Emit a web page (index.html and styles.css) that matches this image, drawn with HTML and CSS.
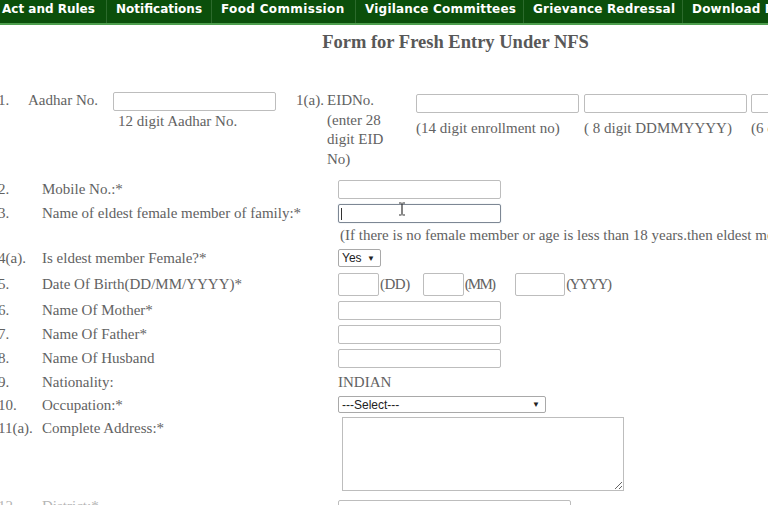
FILE: index.html
```html
<!DOCTYPE html>
<html lang="en">
<head>
<meta charset="utf-8">
<title>Form for Fresh Entry Under NFS</title>
<link rel="stylesheet" href="styles.css">
</head>
<body>
<nav class="topnav">
  <ul>
    <li class="n1">Act and Rules</li>
    <li class="n2">Notifications</li>
    <li class="n3">Food Commission</li>
    <li class="n4">Vigilance Committees</li>
    <li class="n5">Grievance Redressal</li>
    <li class="n6">Download Forms</li>
  </ul>
</nav>
<h1 class="title">Form for Fresh Entry Under NFS</h1>
<div class="form">
  <div class="row1">
    <div class="c-num">1.</div>
    <div class="c-lbl1">Aadhar No.</div>
    <div class="c-aadhar">
      <input class="txt w163" type="text">
      <div class="cap cap-aadhar">12 digit Aadhar No.</div>
    </div>
    <div class="c-num1a">1(a).</div>
    <div class="c-eidlbl"><div class="eidtext">EIDNo. (enter 28 digit EID No)</div></div>
    <div class="c-eid c-eid1">
      <input class="txt w163" type="text">
      <div class="cap cap-eid">(14 digit enrollment no)</div>
    </div>
    <div class="c-eid c-eid2">
      <input class="txt w163" type="text">
      <div class="cap cap-eid">( 8 digit DDMMYYYY)</div>
    </div>
    <div class="c-eid c-eid3">
      <input class="txt w163" type="text">
      <div class="cap cap-eid">(6 digit HHMMSS)</div>
    </div>
  </div>

  <div class="row h24">
    <div class="num">2.</div>
    <div class="lbl">Mobile No.:*</div>
    <div class="fld"><input class="txt w163" type="text"></div>
  </div>
  <div class="row h24">
    <div class="num">3.</div>
    <div class="lbl">Name of eldest female member of family:*</div>
    <div class="fld">
      <div class="focusbox">
        <span class="caret"></span>
        <svg class="ibeam" width="8" height="14" viewBox="0 0 8 14"><path d="M1 1h2.5M4.5 1H7M4 1.5v11M1 13h2.5M4.5 13H7" stroke="#333" stroke-width="1.2" fill="none"/></svg>
      </div>
    </div>
  </div>
  <div class="row h21">
    <div class="num"></div>
    <div class="lbl"></div>
    <div class="fld note">(If there is no female member or age is less than 18 years.then eldest member of the family will be taken as head of family)</div>
  </div>
  <div class="row h24">
    <div class="num">4(a).</div>
    <div class="lbl">Is eldest member Female?*</div>
    <div class="fld"><div class="sel sel-yes"><span>Yes</span><span class="arr">&#9660;</span></div></div>
  </div>
  <div class="row h28">
    <div class="num">5.</div>
    <div class="lbl">Date Of Birth(DD/MM/YYYY)*</div>
    <div class="fld dob">
      <input class="txt dd" type="text"><span class="dlbl d1">(DD)</span>
      <input class="txt mm" type="text"><span class="dlbl d2">(MM)</span>
      <input class="txt yy" type="text"><span class="dlbl d3">(YYYY)</span>
    </div>
  </div>
  <div class="row h24">
    <div class="num">6.</div>
    <div class="lbl">Name Of Mother*</div>
    <div class="fld"><input class="txt w163" type="text"></div>
  </div>
  <div class="row h24">
    <div class="num">7.</div>
    <div class="lbl">Name Of Father*</div>
    <div class="fld"><input class="txt w163" type="text"></div>
  </div>
  <div class="row h24">
    <div class="num">8.</div>
    <div class="lbl">Name Of Husband</div>
    <div class="fld"><input class="txt w163" type="text"></div>
  </div>
  <div class="row h23">
    <div class="num">9.</div>
    <div class="lbl">Nationality:</div>
    <div class="fld">INDIAN</div>
  </div>
  <div class="row h23">
    <div class="num">10.</div>
    <div class="lbl">Occupation:*</div>
    <div class="fld"><div class="sel sel-occ"><span>---Select---</span><span class="arr">&#9660;</span></div></div>
  </div>
  <div class="row h78 top">
    <div class="num">11(a).</div>
    <div class="lbl">Complete Address:*</div>
    <div class="fld"><textarea class="addr"></textarea></div>
  </div>
  <div class="row h24 top">
    <div class="num faint">12.</div>
    <div class="lbl faint">District:*</div>
    <div class="fld"><input class="txt w233" type="text"></div>
  </div>
</div>
</body>
</html>
```
FILE: styles.css
```css
* { box-sizing: border-box; }
html, body { margin: 0; padding: 0; }
body {
  width: 768px;
  height: 505px;
  overflow: hidden;
  background: #fff;
  font-family: "Liberation Serif", "Times New Roman", serif;
  font-size: 15px;
  color: #626262;
}

/* top navigation */
.topnav {
  height: 25px;
  background: #0b4f0b;
  border-bottom: 2px solid #4e9e4e;
  overflow: hidden;
  white-space: nowrap;
}
.topnav ul {
  list-style: none;
  margin: 0 0 0 -7px;
  padding: 0;
  display: flex;
}
.topnav li {
  flex: none;
  height: 23px;
  padding: 0 0 0 9px;
  border-right: 1px solid #2c6a2c;
  font-family: "DejaVu Sans", Verdana, sans-serif;
  font-weight: bold;
  font-size: 12px;
  line-height: 18px;
  color: #fff;
}
.topnav .n1 { width: 114px; }
.topnav .n2 { width: 105px; }
.topnav .n3 { width: 144px; letter-spacing: 0.35px; }
.topnav .n4 { width: 168px; letter-spacing: 0.2px; }
.topnav .n5 { width: 159px; letter-spacing: 0.2px; }
.topnav .n6 { width: 150px; letter-spacing: 0.2px; }

/* title */
.title {
  margin: 6px 0 0;
  padding-left: 143px;
  text-align: center;
  font-size: 18.5px;
  line-height: 22px;
  font-weight: bold;
  color: #585858;
}

/* form */
.form {
  margin: 38px 0 0 -2px;
}

.txt {
  display: block;
  height: 19px;
  margin: 0;
  padding: 0 3px;
  border: 1px solid #bdbdbd;
  border-radius: 2px;
  background: #fff;
  font: 13px "Liberation Sans", sans-serif;
}
.w163 { width: 163px; }
.w233 { width: 233px; }

/* row 1 */
.row1 {
  display: flex;
  align-items: flex-start;
  line-height: 19.5px;
  height: 86px;
}
.c-num { width: 30px; flex: none; }
.c-lbl1 { width: 85px; flex: none; }
.c-aadhar { width: 183px; flex: none; padding-top: 0.5px; }
.cap-aadhar { padding-left: 5px; line-height: 20px; }
.c-num1a { width: 31px; flex: none; }
.c-eidlbl { width: 89px; flex: none; }
.eidtext { width: 60px; }
.c-eid { flex: none; padding-top: 2.5px; }
.c-eid1 { width: 168px; }
.c-eid2 { width: 167px; }
.c-eid3 { width: 180px; }
.cap-eid { margin-top: 5px; white-space: nowrap; line-height: 20px; }

/* other rows */
.row {
  display: flex;
  align-items: center;
  line-height: 24px;
}
.row.top { align-items: flex-start; }
.h21 { height: 21px; line-height: 21px; }
.h23 { height: 23px; }
.h24 { height: 24px; }
.h28 { height: 28px; }
.h78 { height: 78px; }
.num { width: 44px; flex: none; }
.lbl { width: 296px; flex: none; }
.fld { flex: none; }
.note { white-space: nowrap; padding-left: 2px; }
.faint { color: #b5b5b5; }

/* focused field */
.focusbox {
  position: relative;
  width: 163px;
  height: 19px;
  border: 1px solid #7d8794;
  border-radius: 2px;
  box-shadow: 0 0 1px #9ab;
}
.caret {
  position: absolute;
  left: 2px;
  top: 3px;
  width: 1px;
  height: 12px;
  background: #333;
}
.ibeam {
  position: absolute;
  left: 59px;
  top: -3px;
}

/* selects */
.sel {
  display: flex;
  align-items: center;
  justify-content: space-between;
  border: 1px solid #a9a9a9;
  border-radius: 2px;
  background: #fff;
  padding: 0 5px 0 3px;
  font: 12px "Liberation Sans", Arial, sans-serif;
  color: #222;
}
.sel-yes { width: 43px; height: 18px; }
.sel-occ { width: 208px; height: 17px; }
.arr { font-size: 8px; color: #222; }

/* dob */
.dob { display: flex; align-items: center; }
.dob .txt { height: 23px; }
.dd { width: 41px; }
.mm { width: 41px; }
.yy { width: 50px; }
.dlbl { margin-left: 1px; }
.d1 { letter-spacing: -0.5px; margin-right: 13px; }
.d2 { letter-spacing: -1.8px; margin-right: 21px; }
.d3 { letter-spacing: -1.5px; }

/* address */
.addr {
  display: block;
  width: 282px;
  height: 74px;
  margin: 1px 0 0 4px;
  border: 1px solid #bdbdbd;
  resize: both;
  font: 13px "Liberation Sans", sans-serif;
}
.row.top .w233 { margin-top: 6px; }
```
